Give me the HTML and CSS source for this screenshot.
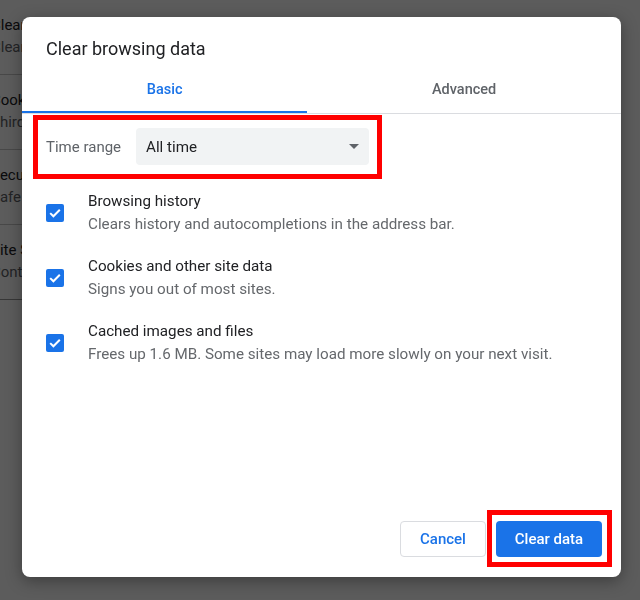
FILE: index.html
```html
<!DOCTYPE html>
<html lang="en">
<head>
    <meta charset="UTF-8">
    <meta name="viewport" content="width=device-width, initial-scale=1.0">
    <title>Clear browsing data</title>
    <link rel="stylesheet" href="styles.css">
</head>
<body>
    <div class="settings">
        <div class="settings-row">
            <div>Clear browsing data</div>
            <div class="settings-sub">Clear history, cookies, cache, and more</div>
        </div>
        <div class="settings-row">
            <div>Cookies and other site data</div>
            <div class="settings-sub">Third-party cookies are blocked</div>
        </div>
        <div class="settings-row">
            <div>Security</div>
            <div class="settings-sub">Safe Browsing and other settings</div>
        </div>
        <div class="settings-row">
            <div>Site Settings</div>
            <div class="settings-sub">Controls what sites can show</div>
        </div>
    </div>

    <div class="scrim"></div>

    <div class="dialog">
        <h1 class="dialog-title">Clear browsing data</h1>

        <div class="tabs">
            <div class="tab active">Basic</div>
            <div class="tab">Advanced</div>
        </div>

        <div class="time-range">
            <span class="time-label">Time range</span>
            <div class="select">
                <span>All time</span>
                <span class="select-arrow"></span>
            </div>
        </div>

        <div class="options">
            <div class="option">
                <span class="checkbox">
                    <svg width="12" height="10" viewBox="0 0 12 10"><path d="M1.2 5.1 L4.4 8.3 L10.8 1.8" fill="none" stroke="#fff" stroke-width="2"/></svg>
                </span>
                <div>
                    <div class="option-title">Browsing history</div>
                    <div class="option-sub">Clears history and autocompletions in the address bar.</div>
                </div>
            </div>
            <div class="option">
                <span class="checkbox">
                    <svg width="12" height="10" viewBox="0 0 12 10"><path d="M1.2 5.1 L4.4 8.3 L10.8 1.8" fill="none" stroke="#fff" stroke-width="2"/></svg>
                </span>
                <div>
                    <div class="option-title">Cookies and other site data</div>
                    <div class="option-sub">Signs you out of most sites.</div>
                </div>
            </div>
            <div class="option">
                <span class="checkbox">
                    <svg width="12" height="10" viewBox="0 0 12 10"><path d="M1.2 5.1 L4.4 8.3 L10.8 1.8" fill="none" stroke="#fff" stroke-width="2"/></svg>
                </span>
                <div>
                    <div class="option-title">Cached images and files</div>
                    <div class="option-sub">Frees up 1.6 MB. Some sites may load more slowly on your next visit.</div>
                </div>
            </div>
        </div>

        <div class="buttons">
            <button class="btn btn-cancel">Cancel</button>
            <button class="btn btn-primary">Clear data</button>
        </div>

        <div class="mark mark-range"></div>
        <div class="mark mark-clear"></div>
    </div>
</body>
</html>
```

FILE: styles.css
```css
body {
    margin: 0;
    width: 640px;
    height: 600px;
    overflow: hidden;
    background: #fff;
    font-family: Roboto, "Liberation Sans", sans-serif;
    color: #202124;
}

/* page behind the dialog */
.settings {
    margin-left: -9px;
    width: 400px;
}

.settings-row {
    height: 75px;
    padding-top: 14px;
    box-sizing: border-box;
    border-bottom: 1px solid #c8c8c8;
    font-size: 15px;
    line-height: 22px;
    white-space: nowrap;
}

.settings-row:last-child {
    border-bottom: 1px solid #999;
}

.settings-sub {
    color: #5f6368;
}

.scrim {
    position: fixed;
    top: 0;
    left: 0;
    right: 0;
    bottom: 0;
    background: rgba(0, 0, 0, 0.64);
}

.dialog {
    position: absolute;
    left: 22px;
    top: 17px;
    width: 599px;
    height: 560px;
    background: #fff;
    border-radius: 8px;
    box-shadow: 0 4px 16px rgba(0, 0, 0, 0.35);
    display: flex;
    flex-direction: column;
}

.dialog-title {
    margin: 0;
    padding: 20px 24px 0;
    font-size: 18px;
    font-weight: 400;
    line-height: 24px;
}

.tabs {
    display: flex;
    margin-top: 7px;
    border-bottom: 1px solid #dadce0;
}

.tab {
    flex: 1 1 auto;
    text-align: center;
    padding: 12px 0 11px;
    line-height: 20px;
    font-size: 14.5px;
    font-weight: 500;
    color: #5f6368;
    border-bottom: 2px solid transparent;
}

.tab.active {
    color: #1a73e8;
    border-bottom-color: #1a73e8;
}

.time-range {
    display: flex;
    align-items: center;
    padding: 14px 24px 0;
}

.time-label {
    font-size: 15px;
    color: #5f6368;
    width: 90px;
}

.select {
    width: 233px;
    height: 37px;
    box-sizing: border-box;
    padding: 0 10px;
    background: #f1f3f4;
    border-radius: 4px;
    display: flex;
    align-items: center;
    justify-content: space-between;
    font-size: 15.2px;
}

.select-arrow {
    width: 0;
    height: 0;
    border-left: 5px solid transparent;
    border-right: 5px solid transparent;
    border-top: 5px solid #5f6368;
}

.options {
    padding: 25px 24px 0;
    display: flex;
    flex-direction: column;
    gap: 20px;
}

.option {
    display: flex;
    align-items: center;
    gap: 24px;
}

.checkbox {
    width: 18px;
    height: 18px;
    border-radius: 2px;
    background: #1a73e8;
    display: flex;
    align-items: center;
    justify-content: center;
    flex-shrink: 0;
}

.option-title {
    font-size: 15.2px;
    line-height: 22px;
}

.option-sub {
    margin-top: 1px;
    font-size: 15.2px;
    line-height: 22px;
    color: #65686c;
}

.buttons {
    margin-top: auto;
    display: flex;
    justify-content: flex-end;
    gap: 10px;
    padding: 0 19px 20px;
}

.btn {
    height: 36px;
    border-radius: 4px;
    font-family: Roboto, "Liberation Sans", sans-serif;
    font-size: 15px;
    font-weight: 500;
    cursor: pointer;
}

.btn-cancel {
    width: 86px;
    background: #fff;
    color: #1a73e8;
    border: 1px solid #dadce0;
}

.btn-primary {
    width: 106px;
    background: #1a73e8;
    color: #fff;
    border: none;
}

/* red annotation frames */
.mark {
    position: absolute;
    border: 5px solid #f00;
    box-sizing: border-box;
}

.mark-range {
    left: 11px;
    top: 98px;
    width: 349px;
    height: 64px;
}

.mark-clear {
    left: 465px;
    top: 493px;
    width: 125px;
    height: 57px;
}
```
